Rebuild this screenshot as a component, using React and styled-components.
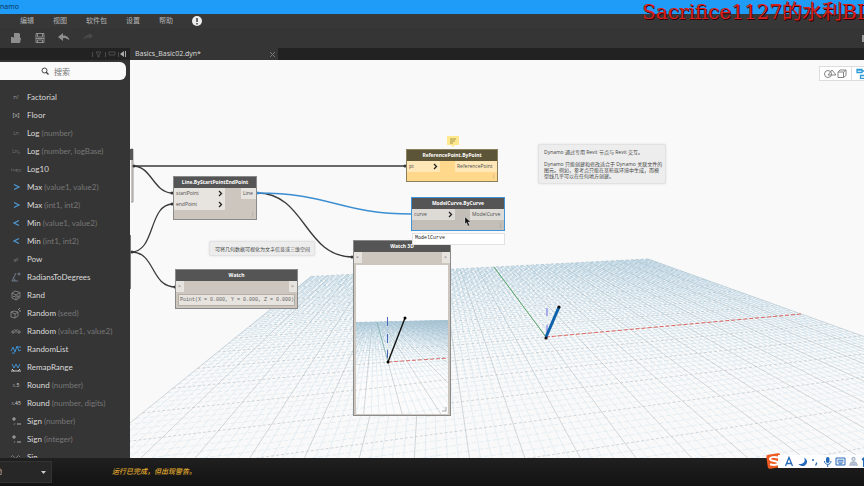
import React from 'react';
import styled, { createGlobalStyle, css } from 'styled-components';

const sans = '"Open Sans", "Noto Sans CJK SC", sans-serif';
const mono = '"Liberation Mono", "Noto Sans CJK SC", monospace';

const GlobalStyle = createGlobalStyle`
  * {
    box-sizing: border-box;
  }

  body {
    margin: 0;
    overflow: hidden;
    background: #353535;
    font-family: ${sans};
  }

  button, input, select {
    margin: 0;
    padding: 0;
    border: 0;
    background: none;
    color: inherit;
    font: inherit;
  }

  svg {
    display: block;
    flex: none;
  }
`;

const Window = styled.div`
  position: relative;
  display: flex;
  flex-direction: column;
  height: 100vh;
  overflow: hidden;
  font-size: 7px;
  line-height: 12px;
  color: #c8c8c8;
`;

const TitleBar = styled.header`
  flex: none;
  height: 14px;
  background: #1f9cf8;
  color: #0a2f50;
  line-height: 14px;
`;

const MenuBar = styled.nav`
  display: flex;
  align-items: center;
  flex: none;
  gap: 19px;
  height: 14px;
  padding-left: 20px;
  background: #373737;
  color: #b4b4b4;
`;

const Toolbar = styled.div`
  display: flex;
  align-items: center;
  flex: none;
  gap: 12px;
  height: 20px;
  padding-left: 10px;
  background: #353535;
`;

const ToolButton = styled.button`
  display: flex;
  align-items: center;
  justify-content: center;
  width: 12px;
  height: 12px;
  color: ${({ $dim }) => ($dim ? '#4a4a4a' : '#8e8e8e')};

  &:last-child {
    width: 2px;
    margin-left: auto;
    background: #9a9a9a;
    height: 7px;
  }
`;

const Main = styled.div`
  display: grid;
  grid-template-columns: 130px minmax(0, 1fr);
  flex: 1;
  min-height: 0;
`;

const Sidebar = styled.aside`
  display: flex;
  flex-direction: column;
  min-height: 0;
  overflow: hidden;
  background: #353535;
`;

const SidebarHeader = styled.div`
  display: flex;
  align-items: center;
  justify-content: flex-end;
  flex: none;
  height: 12px;
  padding-right: 3px;
  background: #222;
`;

const SearchBox = styled.label`
  display: flex;
  align-items: center;
  flex: none;
  gap: 5px;
  height: 18px;
  margin: 2px 4px 0 0;
  padding-left: 41px;
  border-radius: 0 6px 6px 0;
  background: #fafafa;
  color: #444;

  input {
    width: 60px;
    height: 14px;
    font-size: 8px;
    line-height: 12px;
    outline: none;
  }

  input::placeholder {
    color: #777;
    opacity: 1;
  }
`;

const NodeList = styled.ul`
  flex: 1;
  min-height: 0;
  margin: 0;
  padding: 8px 0 0;
  overflow: hidden;
  list-style: none;
`;

const NodeItem = styled.button`
  display: flex;
  align-items: center;
  gap: 5px;
  height: 18px;
  padding-left: 10px;
  color: #dadada;
  font-family: Lato, sans-serif;
  font-size: 8px;
  white-space: pre;
`;

const Params = styled.span`
  color: #777;
`;

const Workspace = styled.main`
  display: flex;
  flex-direction: column;
  min-width: 0;
`;

const TabStrip = styled.div`
  display: flex;
  flex: none;
  height: 12px;
  background: #222;
`;

const Tab = styled.div`
  display: flex;
  align-items: center;
  justify-content: space-between;
  width: 148px;
  padding: 0 3px 0 5px;
  background: #353535;
  color: #ddd;

  button {
    display: flex;
    color: #777;
  }
`;

const Canvas = styled.div`
  position: relative;
  flex: 1;
  overflow: hidden;
  background: #f9f9f9;
`;

const Layer = styled.svg`
  position: absolute;
  top: 0;
  left: 0;
  width: 100%;
  height: 100%;
`;

// Everything placed on the graph carries its own canvas position.
const Placed = styled.div`
  position: absolute;
  left: ${({ $x }) => $x}px;
  top: ${({ $y }) => $y}px;
  width: ${({ $w }) => $w}px;
  height: ${({ $h }) => $h}px;
`;

const palettes = {
  normal: css`
    --head: #555;
    --body: #cdc6be;
    --port: #e7e3de;
    --edge: #8a8a8a;
  `,
  warning: css`
    --head: #5d5538;
    --body: #ffd88c;
    --port: #ffe7b8;
    --edge: #8a805c;
  `,
  selected: css`
    --head: #555;
    --body: #c3beb8;
    --port: #dedbd7;
    --edge: #3f93d6;
  `,
};

const NodeFrame = styled(Placed)`
  ${({ $tone }) => palettes[$tone || 'normal']}
  display: flex;
  flex-direction: column;
  border: 1px solid var(--edge);
  background: var(--body);
  color: #4c4c4c;
  font-size: 5px;
  line-height: 11px;
`;

const NodeTitle = styled.div`
  flex: none;
  height: 11px;
  background: var(--head);
  color: #fff;
  font-family: "Open Sans", sans-serif;
  font-size: 5px;
  font-weight: 700;
  text-align: center;
`;

const PortArea = styled.div`
  display: flex;
  align-items: flex-start;
  justify-content: space-between;
`;

const Port = styled.div`
  display: flex;
  align-items: center;
  justify-content: space-between;
  width: ${({ $w }) => $w}px;
  height: 11px;
  padding: 0 2px;
  background: var(--port);
`;

const Lacing = styled.span`
  align-self: flex-end;
  margin-top: auto;
  padding-right: 2px;
  line-height: 9px;
  color: #888;
`;

const WatchValue = styled.output`
  margin: 2px;
  height: 12px;
  border: 1px solid #b5aea6;
  background: #e7e3de;
  color: #666;
  font-family: ${mono};
  font-size: 5px;
  line-height: 10px;
  text-align: right;
  white-space: nowrap;
`;

const WatchView = styled.div`
  flex: 1;
  margin: 2px;
  background: #fbfbfb;

  svg {
    width: 100%;
    height: 100%;
  }
`;

const Preview = styled(Placed)`
  padding: 0 2px;
  border: 1px solid #e2e2e2;
  background: #fff;
  color: #222;
  font-family: ${mono};
  font-size: 5px;
  line-height: 8px;
`;

const Note = styled(Placed)`
  padding: 4px 5px;
  border: 1px solid #e2e2e2;
  border-radius: 2px;
  background: #ededed;
  box-shadow: 0 0 2px #d8d8d8;
  color: #444;
  font-size: 5px;
  line-height: 6px;
  white-space: nowrap;

  p {
    margin: 0 0 6px;
  }
`;

const ViewSwitch = styled.div`
  position: absolute;
  top: 6px;
  right: 0;
  display: flex;
  height: 15px;
  border: 1px solid #ddd;
  border-right: 0;
  background: #fff;

  button {
    display: flex;
    align-items: center;
    padding: 0 4px;
    overflow: hidden;
  }

  button + button {
    width: 13px;
    border-left: 1px solid #ddd;
  }
`;

const StatusBar = styled.footer`
  display: flex;
  align-items: center;
  flex: none;
  gap: 60px;
  height: 28px;
  background: linear-gradient(#202020, #121212);
`;

const RunMode = styled.label`
  display: flex;
  align-items: center;
  width: 52px;
  height: 22px;
  padding-right: 5px;
  overflow: hidden;
  border: 1px solid #333;
  border-left: 0;
  background: #272727;

  select {
    flex: 1;
    width: 40px;
    margin-left: -5px;
    appearance: none;
    outline: none;
  }
`;

const Status = styled.span`
  color: #e2ab2e;
  font-style: italic;
  font-weight: 500;
`;

const InputMethodBar = styled.div`
  position: absolute;
  right: 0;
  bottom: 17px;
  display: flex;
  align-items: center;
  height: 16px;
`;

const InputMethodIcons = styled.div`
  display: flex;
  align-items: center;
  height: 13px;
  margin-left: -4px;
  background: #fff;
`;

const Watermark = styled.div`
  position: absolute;
  top: 0;
  left: calc(100% - 222px);
  color: #d9201c;
  font-family: "DejaVu Serif", "Noto Sans CJK SC", serif;
  font-size: 20px;
  line-height: 24px;
  text-shadow: 1px 1px 0 #300;
  white-space: nowrap;
`;

const glyphText = { fontFamily: 'Open Sans, sans-serif', textAnchor: 'middle', fill: '#999' };

const glyphs = {
  factorial: <text x="6" y="8" fontSize="6" {...glyphText}>n!</text>,
  floor: <text x="6" y="8" fontSize="6" {...glyphText} fill="#c4c4c4">[x]</text>,
  ln: <text x="6" y="8" fontSize="5" {...glyphText} fill="#777">Ln</text>,
  logb: <text x="6" y="8" fontSize="5" {...glyphText} fill="#777">Ln<tspan fontSize="3" dy="1">b</tspan></text>,
  log10: <text x="6" y="8" fontSize="4" {...glyphText} fill="#888">Log<tspan fontSize="3" dy="1">10</tspan></text>,
  max: <path d="M4 3.5 9 6 4 8.5" stroke="#4f9bd6" strokeWidth="1.2" fill="none" />,
  min: <path d="M9 3.5 4 6 9 8.5" stroke="#4f9bd6" strokeWidth="1.2" fill="none" />,
  pow: <text x="6" y="9" fontSize="5" {...glyphText}>x<tspan fontSize="4" dy="-2">y</tspan></text>,
  radians: (
    <g fill="none" stroke="#7d8ea0" strokeWidth=".8">
      <path d="M2 10 6 2M2 10h6M5 10a3 3 0 0 0-1.6-3" />
      <circle cx="9" cy="3" r="1" />
    </g>
  ),
  rand: (
    <g fill="none" stroke="#8d8d8d" strokeWidth=".8">
      <path d="m2 4 3-2 5 1.500v5L6 11 2 9zM2 4l4 2 4-2.500M6 6v5" />
      <path d="M4 7v1M8 6.500v2" stroke="#ddd" />
    </g>
  ),
  seed: (
    <g fill="none" stroke="#8d8d8d" strokeWidth=".8">
      <path d="m1 5 3-1 4 1v4l-3 2-4-1zM1 5l4 2 3-2M5 7v4" />
      <path d="M8 3l2-2M9 4h2" stroke="#aaa" />
    </g>
  ),
  range: (
    <g fill="none" stroke="#8d8d8d" strokeWidth=".8">
      <path d="M1 7h10M3 5v4M9 5v4M4 4l2 2 2-2" />
    </g>
  ),
  list: (
    <g fill="none" stroke="#3d8fd0" strokeWidth="1">
      <path d="m1 8 2-4 2 5 2-6 2 5 2-1M2 10h3M8 4h3" />
    </g>
  ),
  remap: (
    <g fill="none" strokeWidth="1">
      <path d="m2 3 2 4 2-4 2 4 2-4" stroke="#3d8fd0" />
      <path d="M1 10h10M2 8l2 2M10 8l-2 2" stroke="#ccc" />
    </g>
  ),
  round: <text x="6" y="8" fontSize="5" {...glyphText}>x<tspan fill="#ddd">.5</tspan></text>,
  digits: <text x="6" y="8" fontSize="5" {...glyphText}>x<tspan fill="#ddd">.45</tspan></text>,
  sign: (
    <g fill="none" stroke="#bbb" strokeWidth=".9">
      <path d="M2 4h4M4 2v4M7 9h4" />
      <path d="m4 10 1-2" stroke="#777" />
    </g>
  ),
  sin: <path d="M1 6q1.500-3 3 0t3 0 3 0M1 8h10" stroke="#888" strokeWidth=".8" fill="none" />,
};

const libraryNodes = [
  ['factorial', 'Factorial'],
  ['floor', 'Floor'],
  ['ln', 'Log', '(number)'],
  ['logb', 'Log', '(number, logBase)'],
  ['log10', 'Log10'],
  ['max', 'Max', '(value1, value2)'],
  ['max', 'Max', '(int1, int2)'],
  ['min', 'Min', '(value1, value2)'],
  ['min', 'Min', '(int1, int2)'],
  ['pow', 'Pow'],
  ['radians', 'RadiansToDegrees'],
  ['rand', 'Rand'],
  ['seed', 'Random', '(seed)'],
  ['range', 'Random', '(value1, value2)'],
  ['list', 'RandomList'],
  ['remap', 'RemapRange'],
  ['round', 'Round', '(number)'],
  ['digits', 'Round', '(number, digits)'],
  ['sign', 'Sign', '(number)'],
  ['sign', 'Sign', '(integer)'],
  ['sin', 'Sin'],
];

// Each camera is a plane homography. The ground runs from -1 to 1 in depth
// and from -reach to reach across; far and near are the ends of the fade.
const mainCamera = {
  id: 'main', a: 379.2, b: 348, c: 546, d: 25.7, e: 146.3, f: 337, g: 0.155, h: 0.81, reach: 1, far: 260, near: 400,
};
const watchCamera = {
  id: 'watch', a: 299, b: 1158, c: 388, d: 86, e: 958, f: 362, g: 0.28, h: 3.1, reach: 3, far: 320, near: 380,
};

const NEAR = 0.15;

const project = ({ a, b, c, d, e, f, g, h }, u, v) => {
  const w = 1 + g * u + h * v;
  return `${((c + a * u + b * v) / w).toFixed(1)} ${((f + d * u + e * v) / w).toFixed(1)}`;
};

const alongV = (camera, u) => {
  const start = Math.max(-1, (NEAR - 1 - camera.g * u) / camera.h);
  return `M${project(camera, u, start)}L${project(camera, u, 1)}`;
};

const alongU = (camera, v) => {
  const start = Math.max(-camera.reach, (NEAR - 1 - camera.h * v) / camera.g);
  return start < camera.reach ? `M${project(camera, start, v)}L${project(camera, camera.reach, v)}` : '';
};

const steps = count => Array.from({ length: count * 2 + 1 }, (_, i) => i - count);
const isMinor = i => i % 5 !== 0;
const isMajor = i => i % 5 === 0;

const GroundGrid = ({ camera }) => {
  const across = steps(50 * camera.reach);
  const deep = steps(50);
  return (
    <g fill="none" strokeWidth=".7">
      <defs>
        <linearGradient id={`minor-${camera.id}`} gradientUnits="userSpaceOnUse" x1="0" x2="0" y1={camera.far} y2={camera.near}>
          <stop stopColor="#b3cfdf" />
          <stop offset="1" stopColor="#dde9f0" />
        </linearGradient>
        <linearGradient id={`major-${camera.id}`} gradientUnits="userSpaceOnUse" x1="0" x2="0" y1={camera.far} y2={camera.near}>
          <stop stopColor="#a3bfce" />
          <stop offset="1" stopColor="#bfc7cc" />
        </linearGradient>
      </defs>
      <g stroke={`url(#minor-${camera.id})`}>
        <path d={across.filter(isMinor).map(i => alongV(camera, i / 50)).join('')} />
        <path d={deep.filter(isMinor).map(i => alongU(camera, i / 50)).join('')} strokeDasharray="5 2" />
      </g>
      <g stroke={`url(#major-${camera.id})`}>
        <path d={across.filter(isMajor).map(i => alongV(camera, i / 50)).join('')} />
        <path d={deep.filter(isMajor).map(i => alongU(camera, i / 50)).join('')} strokeDasharray="3 2" />
      </g>
    </g>
  );
};

const Background = () => (
  <Layer aria-hidden="true">
    <g transform="translate(-130 -60)">
      <GroundGrid camera={mainCamera} />
      <path d="M546 337 494 267" stroke="#5aa469" />
      <path d="M546 337 801 314" stroke="#e0645f" strokeDasharray="4 2" />
      <path d="M547 333v-8M547 316v-8" stroke="#6a6ae0" />
      <path d="M546 337 559 307" stroke="#0d62ab" strokeWidth="3" />
      <circle cx="546" cy="338" r="1.600" fill="#111" />
      <circle cx="559" cy="307" r="1.600" fill="#111" />
    </g>
  </Layer>
);

const Wires = () => (
  <Layer aria-hidden="true">
    <g transform="translate(-130 -60)" fill="none" stroke="#3a3a3a" strokeWidth="1.300">
      <path d="M131 149h2v53h-2" fill="#cdc6be" stroke="#999" strokeWidth="1" />
      <path d="M130 149h3v11h-3z" fill="#555" stroke="none" />
      <path d="M130.500 235v54" stroke="#777" strokeWidth="1" />
      <path d="M133 166H406" />
      <path d="M133 166C152 166 153 193 173 193" />
      <path d="M131 252C156 252 148 204 173 204" />
      <path d="M131 252C156 252 150 287 176 287" />
      <path d="M257 193C306 193 304 257 353 257" />
      <path d="M257 193C330 193 340 214 412 214" stroke="#3b8ed2" strokeWidth="1.500" />
      <g fill="#333" stroke="none">
        <circle cx="134" cy="166" r="1.500" />
        <circle cx="132" cy="252" r="1.500" />
        <circle cx="172" cy="193" r="1.500" />
        <circle cx="172" cy="204" r="1.500" />
        <circle cx="175" cy="287" r="1.500" />
        <circle cx="405" cy="166" r="1.500" />
        <circle cx="352" cy="257" r="1.500" />
        <circle cx="258" cy="193" r="1.500" fill="#3b8ed2" />
      </g>
    </g>
  </Layer>
);

const Chevron = () => (
  <svg width="5" height="7" viewBox="0 0 5 7">
    <path d="m1 1 2.500 2.500L1 6" fill="none" stroke="#222" strokeWidth="1.300" />
  </svg>
);

const GraphNode = ({ title, x, y, w, h, tone, inputs, output, inputWidth, outputWidth }) => (
  <NodeFrame $x={x} $y={y} $w={w} $h={h} $tone={tone}>
    <NodeTitle>{title}</NodeTitle>
    <PortArea>
      <div>
        {inputs.map(name => (
          <Port key={name} $w={inputWidth}>
            {name}
            <Chevron />
          </Port>
        ))}
      </div>
      <Port $w={outputWidth}>{output}</Port>
    </PortArea>
    <Lacing>|</Lacing>
  </NodeFrame>
);

const WatchPorts = () => (
  <PortArea>
    <Port $w={8}>&gt;</Port>
    <Port $w={8}>&gt;</Port>
  </PortArea>
);

const Library = () => (
  <Sidebar>
    <SidebarHeader>
      <svg width="36" height="10" viewBox="0 0 36 10" fill="none" stroke="#555">
        <path d="M1.500 3v5M14.500 3v5M27.500 3v5M5 3h5L8 6v2H7V6zM18 3h6v3h-6z" strokeWidth=".8" />
        <path d="m33 2-4 3 4 3z" fill="#aaa" stroke="none" />
        <path d="M34.500 2v6" stroke="#aaa" />
      </svg>
    </SidebarHeader>
    <SearchBox>
      <svg width="8" height="8" viewBox="0 0 8 8" fill="none" stroke="currentColor">
        <circle cx="3.500" cy="3.500" r="2.500" />
        <path d="m5 5 2.500 2.500" strokeWidth="1.400" />
      </svg>
      <input type="text" placeholder="搜索" aria-label="搜索" />
    </SearchBox>
    <NodeList>
      {libraryNodes.map(([icon, name, params]) => (
        <li key={name + params}>
          <NodeItem type="button">
            <svg width="12" height="12" viewBox="0 0 12 12">{glyphs[icon]}</svg>
            <span>
              {name}
              {params && <Params> {params}</Params>}
            </span>
          </NodeItem>
        </li>
      ))}
    </NodeList>
  </Sidebar>
);

const Graph = () => (
  <Canvas>
    <Background />
    <Wires />
    <Note as="aside" $x={79} $y={181} $w={106} $h={15}>可将几何数据可视化为文字信息或三维空间</Note>
    <Note as="aside" $x={408} $y={84} $w={128} $h={40}>
      <p>Dynamo 通过专用 Revit 节点与 Revit 交互。</p>
      Dynamo 只能创建和修改适合于 Dynamo 关联文件的
      <br />
      图元。例如，参考点只能在某些族环境中生成，而模
      <br />
      型线几乎可以在任何地方创建。
    </Note>
    <GraphNode
      title="Line.ByStartPointEndPoint"
      x={43}
      y={116}
      w={84}
      h={44}
      inputs={['startPoint', 'endPoint']}
      inputWidth={51}
      output="Line"
      outputWidth={15}
    />
    <NodeFrame $x={45} $y={209} $w={123} $h={40}>
      <NodeTitle>Watch</NodeTitle>
      <WatchPorts />
      <WatchValue>Point(X = 0.000, Y = 0.000, Z = 0.000)</WatchValue>
    </NodeFrame>
    <NodeFrame $x={223} $y={180} $w={98} $h={176}>
      <NodeTitle>Watch 3D</NodeTitle>
      <WatchPorts />
      <WatchView>
        <svg viewBox="356 265 92 149" preserveAspectRatio="xMinYMin slice" aria-hidden="true">
          <GroundGrid camera={watchCamera} />
          <path d="M388 362 377 322" stroke="#7fb5b0" strokeWidth=".8" />
          <path d="M388 362 449 358" stroke="#d9706c" strokeDasharray="4 2" />
          <path d="M387.500 358v-8M387.500 343v-9M387.500 326v-9" stroke="#4a6ac0" />
          <path d="M388 362 405 318" stroke="#111" strokeWidth="1.400" />
          <circle cx="388" cy="362" r="1.500" />
          <circle cx="405" cy="318" r="1.500" />
          <path d="M442 411h4v-4" fill="none" stroke="#aaa" />
        </svg>
      </WatchView>
    </NodeFrame>
    <Placed $x={317} $y={76} $w={12} $h={12}>
      <svg width="12" height="12" viewBox="0 0 12 12">
        <path d="M0 0h12v9H8l-2 2-2-2H0z" fill="#ffe98c" />
        <path d="M3 3h6M3 5h5M3 7h3" stroke="#8c7d40" strokeWidth=".8" />
      </svg>
    </Placed>
    <GraphNode
      title="ReferencePoint.ByPoint"
      x={276}
      y={89}
      w={92}
      h={33}
      tone="warning"
      inputs={['pt']}
      inputWidth={33}
      output="ReferencePoint"
      outputWidth={42}
    />
    <GraphNode
      title="ModelCurve.ByCurve"
      x={281}
      y={137}
      w={94}
      h={34}
      tone="selected"
      inputs={['curve']}
      inputWidth={43}
      output="ModelCurve"
      outputWidth={34}
    />
    <Preview $x={282} $y={173} $w={93} $h={12}>ModelCurve</Preview>
    <Placed $x={334} $y={157} $w={8} $h={10}>
      <svg width="8" height="10" viewBox="0 0 8 10">
        <path d="M1 0v7l1.500-1.500L4 9l1.500-.6L4 5h2.500z" fill="#111" stroke="#fff" strokeWidth=".3" />
      </svg>
    </Placed>
    <ViewSwitch>
      <button type="button" aria-label="3D">
        <svg width="23" height="11" viewBox="0 0 23 11" fill="none" stroke="#777" strokeWidth=".9">
          <circle cx="4" cy="6" r="3.500" />
          <path d="m4 7 4-5 4 5zM14 4h5.500v5.500H14zM14 4l2-2h6v5.500l-2.500 2M19.500 4 22 2" />
        </svg>
      </button>
      <button type="button" aria-label="Graph">
        <svg width="14" height="11" viewBox="0 0 14 11" fill="none" stroke="#2f9bd6">
          <path d="M1 1.500h5v3H1zM1 2h5M6 3h3M4.500 7.500H9v3H4.500z" strokeWidth="1.300" />
        </svg>
      </button>
    </ViewSwitch>
  </Canvas>
);

const InputMethod = () => (
  <InputMethodBar>
    <svg width="16" height="16" viewBox="0 0 16 16">
      <rect x="1" y="1" width="14" height="14" rx="2" fill="#ee5a20" transform="rotate(-8 8 8)" />
      <path d="M12 4.500C8 3.500 4 4 4 6c0 2.500 8 1.500 8 4 0 2-4 2.500-8 1.200" fill="none" stroke="#fff" strokeWidth="2" />
    </svg>
    <InputMethodIcons>
      <svg width="86" height="13" viewBox="778 0 86 13" fill="none" stroke="#2468b8" strokeWidth="1.300">
        <path d="M785.500 11 789 2.500l3.500 8.500M787 8.500h4.500" />
        <path d="M804 2.500c2 3.500 0 7-5.500 6.500 3.500 4 9 1.500 8.500-3C806.500 4.500 805.500 3.500 804 2.500z" fill="#2468b8" stroke="none" />
        <circle cx="813" cy="5" r="1" fill="#2468b8" stroke="none" />
        <path d="M816.500 7.500v1l-1 2" />
        <rect x="826" y="2" width="3.500" height="6" rx="1.700" fill="#2468b8" stroke="none" />
        <path d="M824.500 6c0 4.500 6.500 4.500 6.500 0M827.700 9.500V12" strokeWidth="1" />
        <path d="M836 3h9v7h-9zM837.500 5.200h6M837.500 7h6M838.500 8.800h4" strokeWidth="1" />
        <g stroke="#a7b6c8">
          <circle cx="853.500" cy="4" r="1.500" />
          <path d="M850 10c1-4 6-4 7 0zM852 9h3" />
        </g>
        <path d="m861.500 4 2.500-2v10h-1V6z" fill="#2468b8" stroke="none" />
      </svg>
    </InputMethodIcons>
  </InputMethodBar>
);

const App = () => (
  <>
    <GlobalStyle />
    <Window>
      <TitleBar>namo</TitleBar>
      <MenuBar>
        {['编辑', '视图', '软件包', '设置', '帮助'].map(label => (
          <button type="button" key={label}>{label}</button>
        ))}
        <button type="button" aria-label="!">
          <svg width="10" height="10" viewBox="0 0 10 10">
            <circle cx="5" cy="5" r="5" fill="#eee" />
            <path d="M5 2v4M5 7v1.500" stroke="#333" strokeWidth="1.400" />
          </svg>
        </button>
      </MenuBar>
      <Toolbar>
        <ToolButton type="button" aria-label="Open">
          <svg width="12" height="12" viewBox="0 0 12 12" fill="currentColor">
            <path d="M4 1h5l1 1v4H4zM1 5h2l1 1h7l-1 5H1z" />
          </svg>
        </ToolButton>
        <ToolButton type="button" aria-label="Save">
          <svg width="12" height="12" viewBox="0 0 12 12" fill="none" stroke="currentColor">
            <path d="M2 1.500h8v9H2zM3.500 2v3h5V2M2 6.500h8M3.500 10V8h5v2" />
          </svg>
        </ToolButton>
        <ToolButton type="button" aria-label="Undo">
          <svg width="12" height="12" viewBox="0 0 12 12" fill="currentColor">
            <path d="m0 5 5-4v2.500c4 0 6 2 6.500 5C9.500 6.500 7.500 6 5 6v3z" />
          </svg>
        </ToolButton>
        <ToolButton type="button" aria-label="Redo" $dim>
          <svg width="12" height="12" viewBox="0 0 12 12" fill="currentColor">
            <path d="M11 4 7 1v2C4 3 1.500 5 1 8c2-2 3.500-2.500 6-2.500V7z" />
          </svg>
        </ToolButton>
        <ToolButton type="button" aria-label="Export" />
      </Toolbar>
      <Main>
        <Library />
        <Workspace>
          <TabStrip>
            <Tab>
              Basics_Basic02.dyn*
              <button type="button" aria-label="Close">
                <svg width="5" height="5" viewBox="0 0 5 5">
                  <path d="m0 0 5 5M5 0 0 5" stroke="currentColor" />
                </svg>
              </button>
            </Tab>
          </TabStrip>
          <Graph />
        </Workspace>
      </Main>
      <StatusBar>
        <RunMode>
          <select aria-label="Run mode" defaultValue="auto">
            <option value="auto">动</option>
          </select>
          <svg width="5" height="3" viewBox="0 0 5 3">
            <path d="M0 0h5L2.500 3z" fill="#ccc" />
          </svg>
        </RunMode>
        <Status>运行已完成，但出现警告。</Status>
      </StatusBar>
      <InputMethod />
      <Watermark>Sacrifice1127的水利BI</Watermark>
    </Window>
  </>
);

export default App;
